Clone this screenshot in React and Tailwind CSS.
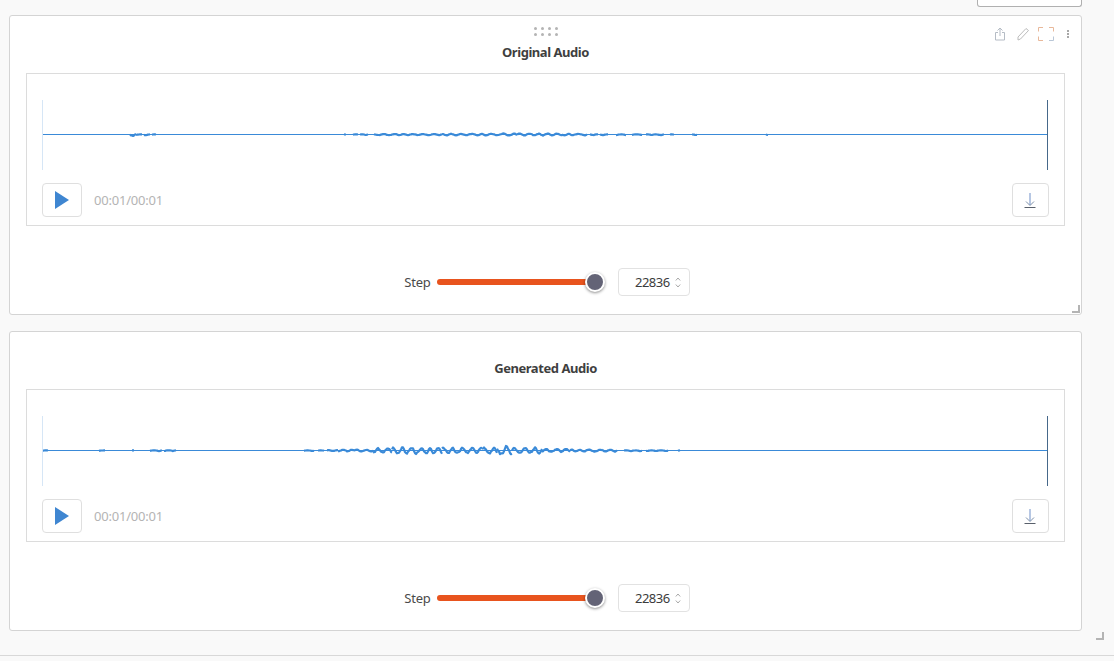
import React from 'react';

const FONT = 'font-["Noto_Sans",sans-serif]';

// amplitude segments: [from, to, up, down] in px, relative to the wave's left edge
const ORIGINAL = [
  [88, 94, 1.6, 1.6], [94, 100, 0.2, 0.6], [102, 108, 0.1, 0.7], [110, 114, 0.1, 0.6],
  [302, 304, 0.1, 0.6], [311, 316, 0.1, 0.7], [318, 326, 0.1, 0.7],
  [332, 400, 0.5, 0.8], [400, 460, 0.8, 1], [460, 475, 1.4, 1.2], [475, 520, 1.1, 1.2], [520, 545, 0.8, 1],
  [548, 556, 0.2, 0.8], [558, 566, 0.1, 0.7], [574, 584, 0.1, 0.7], [590, 600, 0.1, 0.6], [604, 622, 0.1, 0.7],
  [628, 632, 0.1, 0.6], [650, 655, 0.1, 0.6], [724, 726, 0.1, 0.5],
];

const GENERATED = [
  [0, 6, 0.1, 0.4], [57, 63, 0.1, 0.5], [90, 92, 0.1, 0.5], [108, 120, 0.1, 0.7], [122, 134, 0.2, 0.7],
  [262, 272, 0.1, 0.6], [276, 282, 0.1, 0.6], [285, 296, 0.4, 0.7], [296, 312, 1, 1], [312, 331, 1, 1.1],
  [331, 350, 2.6, 2.8], [350, 400, 3.6, 3.6], [400, 440, 3, 3.2], [440, 455, 3.4, 3.8], [455, 470, 5.5, 4], [470, 500, 3.2, 3.2],
  [500, 528, 1.7, 1.8], [528, 560, 1, 1.2], [560, 575, 1.1, 1.3], [582, 600, 0.1, 0.7], [604, 626, 0.1, 0.7], [636, 638, 0.1, 0.5],
];

function wavePoints(segments, seed) {
  let s = seed;
  const rand = () => {
    s = (s * 9301 + 49297) % 233280;
    return s / 233280;
  };
  return segments.map((seg) => {
    const points = [];
    let phase = rand() * 6;
    for (let x = seg[0]; x <= seg[1]; x += 1) {
      // the phase wanders so the peaks stay uneven
      phase += 0.3 + rand() * 0.7;
      const swing = Math.sin(phase) * (0.6 + rand() * 0.4);
      const y = 34.5 + (swing < 0 ? swing * seg[2] : swing * seg[3]);
      points.push(`${x},${y.toFixed(1)}`);
    }
    return points.join(' ');
  });
}

function Waveform({ segments, seed }) {
  return (
    <svg width="1006" height="70" viewBox="0 0 1006 70" className="block">
      {wavePoints(segments, seed).map((points, i) => (
        <polyline key={i} points={points} fill="none" stroke="#3a8ad8" strokeWidth="2.2" strokeLinejoin="round" />
      ))}
      <rect x="0" y="34" width="1006" height="1" fill="#3a8ad8" />
      <rect x="0" y="0" width="1" height="70" fill="#d6e6f6" />
      <rect x="1005" y="0" width="1" height="70" fill="#46688a" />
    </svg>
  );
}

function AudioBox({ segments, seed }) {
  return (
    <div className="h-[153px] border border-[#dcdcdc] bg-white pl-[15px] pr-[15px] pt-[26px]">
      <Waveform segments={segments} seed={seed} />
      <div className="mt-[13px] flex items-center">
        <div className="flex h-[34px] w-[40px] items-center justify-center rounded border border-[#dfdfdf]">
          <svg width="14" height="18" viewBox="0 0 14 18">
            <path d="M0 0 L14 9 L0 18 Z" fill="#3f86d1" />
          </svg>
        </div>
        <span className="ml-3 pt-[2px] text-[13px] tracking-[-0.2px] text-[#b4b4b4]">00:01/00:01</span>
        <div className="ml-auto flex h-[34px] w-[37px] items-center justify-center rounded border border-[#dfdfdf] pr-[1px]">
          <svg width="12" height="15" viewBox="0 0 12 15" fill="none" strokeWidth="1">
            <path d="M6 0 V12" stroke="#6f8fc8" />
            <path d="M2 8.5 L6 12.5 L10 8.5" stroke="#7d8fa8" />
            <path d="M0.5 14.5 H11.5" stroke="#59606b" />
          </svg>
        </div>
      </div>
    </div>
  );
}

function StepRow() {
  return (
    <div className="mt-[42px] flex h-[28px] items-center justify-center pl-[3px]">
      <span className="pt-[2px] text-[13px] tracking-[-0.2px] text-[#4a4a4a]">Step</span>
      <div className="relative ml-[6px] h-[6px] w-[158px] rounded-full bg-[#e8541e]">
        <div className="absolute right-[-10px] top-[-7px] h-[20px] w-[20px] rounded-full border-2 border-white bg-[#636376] shadow-[0_1px_3px_rgba(0,0,0,0.45)]" />
      </div>
      <div className="ml-[23px] flex h-[28px] w-[72px] items-center justify-end rounded border border-[#e2e2e2] pr-[8px]">
        <span className="pt-[2px] text-[13px] tracking-[-0.5px] text-[#3c3c3c]">22836</span>
        <svg width="6" height="11" viewBox="0 0 6 11" fill="none" stroke="#a8a8a8" className="ml-[5px]">
          <path d="M0.8 3.5 L3 1 L5.2 3.5" />
          <path d="M0.8 7.5 L3 10 L5.2 7.5" />
        </svg>
      </div>
    </div>
  );
}

function PanelTools() {
  return (
    <div className="absolute right-[12px] top-[11px] flex items-center">
      <svg width="12" height="14" viewBox="0 0 12 14" fill="none" stroke="#b5bcc5" strokeWidth="1">
        <path d="M6 1 V9 M3.5 3.5 L6 1 L8.5 3.5" />
        <path d="M4 5.5 H1.5 V13 H10.5 V5.5 H8" />
      </svg>
      <svg width="13" height="14" viewBox="0 0 13 14" fill="none" stroke="#bcbcbc" strokeWidth="1" className="ml-[11px]">
        <path d="M1 10 L9 1.5 L11.5 3.5 L3.5 12 L1 13 Z" />
      </svg>
      <svg width="16" height="14" viewBox="0 0 16 14" fill="none" strokeWidth="1" className="ml-[8px]">
        <path d="M5 0.5 H0.5 V4.5" stroke="#e8b89a" />
        <path d="M11 0.5 H15.5 V4.5" stroke="#e8b89a" />
        <path d="M0.5 9.5 V13.5 H5" stroke="#e8b89a" />
        <path d="M15.5 9.5 V13.5 H11" stroke="#b9c6d6" />
      </svg>
      <div className="ml-[13px] flex flex-col gap-[1px]">
        <div className="h-[2px] w-[2px] bg-[#a8a8a8]" />
        <div className="h-[2px] w-[2px] bg-[#a8a8a8]" />
        <div className="h-[2px] w-[2px] bg-[#a8a8a8]" />
      </div>
    </div>
  );
}

function DragDots() {
  return (
    <div className="absolute left-[524px] top-[11px] grid grid-cols-4 gap-x-[4px] gap-y-[3px]">
      {[0, 1, 2, 3, 4, 5, 6, 7].map((i) => (
        <div key={i} className="h-[3px] w-[3px] rounded-full bg-[#b4b4b4]" />
      ))}
    </div>
  );
}

function ResizeMark({ className }) {
  return (
    <svg width="8" height="8" viewBox="0 0 8 8" className={className}>
      <path d="M6 0 H8 V8 H0 V6 H6 Z" fill="#b4b4b4" />
    </svg>
  );
}

function Panel({ title, segments, seed, hover }) {
  return (
    <div className="relative h-[300px] w-[1073px] rounded-[3px] border border-[#d4d4d4] bg-white px-[16px]">
      {hover && <DragDots />}
      {hover && <PanelTools />}
      <div className="flex h-[57px] items-center justify-center pt-[17px] text-[13px] font-bold tracking-[-0.45px] text-[#3f3f3f]">{title}</div>
      <AudioBox segments={segments} seed={seed} />
      <StepRow />
      {hover && <ResizeMark className="absolute bottom-[1px] right-[1px]" />}
    </div>
  );
}

export default function App() {
  return (
    <div className={`h-[661px] w-[1114px] overflow-hidden bg-[#f9f9f9] ${FONT}`}>
      <div className="flex h-[15px] items-start justify-end pr-[32px]">
        <div className="h-[7px] w-[105px] rounded-b-[3px] border border-t-0 border-[#b0b0b0] bg-white" />
      </div>
      <div className="ml-[9px] flex flex-col gap-[16px]">
        <Panel title="Original Audio" segments={ORIGINAL} seed={17} hover />
        <div className="relative">
          <Panel title="Generated Audio" segments={GENERATED} seed={53} />
          <ResizeMark className="absolute bottom-[-9px] left-[1087px]" />
        </div>
      </div>
      <div className="mt-[24px] border-t border-[#d8d8d8]" />
    </div>
  );
}
